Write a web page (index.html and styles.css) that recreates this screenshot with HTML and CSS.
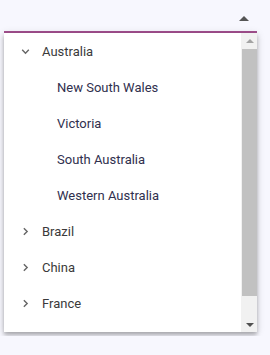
FILE: index.html
```html
<!DOCTYPE html>
<html lang="en">
<head>
  <meta charset="UTF-8">
  <title>Region select</title>
  <link rel="stylesheet" href="styles.css">
</head>
<body>
  <div class="field">
    <div class="select">
      <span class="value"></span>
      <span class="arrow"></span>
    </div>
    <div class="panel">
      <div class="tree">
        <div class="node parent">
          <svg class="chev" viewBox="0 0 10 10"><path d="M2 3.5 L5 6.5 L8 3.5" /></svg>
          <span>Australia</span>
        </div>
        <div class="node child">New South Wales</div>
        <div class="node child">Victoria</div>
        <div class="node child">South Australia</div>
        <div class="node child">Western Australia</div>
        <div class="node parent">
          <svg class="chev" viewBox="0 0 10 10"><path d="M3.5 2 L6.5 5 L3.5 8" /></svg>
          <span>Brazil</span>
        </div>
        <div class="node parent">
          <svg class="chev" viewBox="0 0 10 10"><path d="M3.5 2 L6.5 5 L3.5 8" /></svg>
          <span>China</span>
        </div>
        <div class="node parent">
          <svg class="chev" viewBox="0 0 10 10"><path d="M3.5 2 L6.5 5 L3.5 8" /></svg>
          <span>France</span>
        </div>
      </div>
      <div class="scrollbar">
        <span class="btn up"></span>
        <div class="track"><div class="thumb"></div></div>
        <span class="btn down"></span>
      </div>
    </div>
  </div>
</body>
</html>
```

FILE: styles.css
```css
body {
  margin: 0;
  padding: 4px;
  background: #f7f7fe;
  font-family: Roboto, 'Noto Sans', sans-serif;
  font-size: 13px;
}
.field { width: 253px; }
.select {
  height: 27px;
  display: flex; align-items: center; justify-content: flex-end;
  border-bottom: 2px solid #a3508f;
}
.arrow {
  width: 0; height: 0;
  margin-right: 8px; margin-top: 2px;
  border-left: 5px solid transparent;
  border-right: 5px solid transparent;
  border-bottom: 5px solid #555;
}
.panel {
  height: 299px;
  display: flex;
  overflow: hidden;
  background: #fff;
  box-shadow: 0 3px 4px rgba(0,0,0,0.25), 0 1px 8px rgba(0,0,0,0.15);
}
.tree { flex: 1; }
.node {
  height: 36px;
  display: flex; align-items: center;
}
.parent { padding-left: 16px; color: #3a3a3a; }
.child { padding-left: 53px; color: #30304e; }
.chev {
  width: 11px; height: 11px;
  margin-right: 11px;
  fill: none; stroke: #666; stroke-width: 1.3;
}
.scrollbar {
  width: 15px;
  background: #f1f1f1;
  display: flex; flex-direction: column; align-items: center;
  padding-left: 1px;
}
.btn {
  height: 15px;
  display: flex; align-items: center; justify-content: center;
}
.btn::before {
  content: '';
  border-left: 4px solid transparent;
  border-right: 4px solid transparent;
}
.up::before { border-bottom: 4px solid #a3a3a3; }
.down::before { border-top: 4px solid #505050; }
.track { flex: 1; width: 100%; padding-top: 1px; }
.thumb {
  height: 247px;
  margin: 0 0 0 0;
  background: #c1c1c1;
}
```
